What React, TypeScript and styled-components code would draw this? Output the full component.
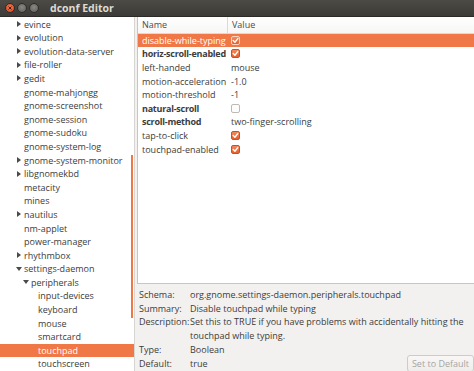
import React from 'react';
import styled, { createGlobalStyle } from 'styled-components';

const GlobalStyle = createGlobalStyle`
  html, body {
    margin: 0;
    padding: 0;
    background: #f2f1f0;
  }
  body {
    font-family: 'Open Sans', 'DejaVu Sans', sans-serif;
    font-size: 9px;
    color: #3c3c3c;
  }
`;

const Window = styled.div`
  width: 474px;
  height: 371px;
  display: flex;
  flex-direction: column;
  overflow: hidden;
  background: #f2f1f0;
`;

const TitleBar = styled.div`
  height: 17px;
  flex: 0 0 17px;
  display: flex;
  align-items: center;
  gap: 2px;
  padding-left: 5px;
  background: linear-gradient(#4b4a45, #3c3b37);
  border-bottom: 1px solid #2b2a27;
  box-sizing: border-box;
`;

const WinButton = styled.span<{ $close?: boolean }>`
  width: 10px;
  height: 10px;
  border-radius: 50%;
  background: ${(p) =>
    p.$close
      ? 'radial-gradient(circle at 50% 40%, #f47a4f, #d9401c)'
      : 'radial-gradient(circle at 50% 40%, #8a8882, #5c5b56)'};
  border: 1px solid #2e2d2a;
  box-sizing: border-box;
  display: flex;
  align-items: center;
  justify-content: center;
`;

const Title = styled.span`
  margin-left: 9px;
  font-weight: bold;
  font-size: 10.5px;
  color: #dfdbd2;
`;

const Body = styled.div`
  flex: 1;
  display: flex;
  min-height: 0;
`;

const TreePane = styled.div`
  position: relative;
  width: 134px;
  flex: 0 0 134px;
  background: #ffffff;
  display: flex;
  flex-direction: column;
  padding-top: 0.3px;
  overflow: hidden;
`;

const TreeRow = styled.div<{ $level: number; $selected?: boolean }>`
  height: 13.6px;
  flex: 0 0 13.6px;
  display: flex;
  align-items: center;
  padding-left: ${(p) => 16 + p.$level * 7}px;
  background: ${(p) => (p.$selected ? '#f07746' : 'transparent')};
  color: ${(p) => (p.$selected ? '#ffffff' : '#3c3c3c')};
  white-space: nowrap;
`;

const Expander = styled.span`
  width: 6px;
  height: 6px;
  margin-right: 2px;
  display: flex;
  align-items: center;
  justify-content: center;
  color: #4a4a4a;
`;

const ScrollIndicator = styled.div`
  position: absolute;
  right: 1px;
  top: 138px;
  width: 2px;
  height: 163px;
  background: #f07746;
`;

const Handle = styled.div`
  width: 3px;
  flex: 0 0 3px;
  background: #f2f1f0;
  border-left: 1px solid #d8d6d2;
  box-sizing: border-box;
`;

const RightPane = styled.div`
  flex: 1;
  display: flex;
  flex-direction: column;
  min-width: 0;
`;

const ListFrame = styled.div`
  height: 267px;
  flex: 0 0 267px;
  background: #ffffff;
  border-left: 1px solid #c9c6c0;
  border-bottom: 1px solid #c9c6c0;
  display: flex;
  flex-direction: column;
  box-sizing: border-box;
`;

const HeaderRow = styled.div`
  height: 16.5px;
  flex: 0 0 16.5px;
  display: grid;
  grid-template-columns: 90px 1fr;
  background: linear-gradient(#ffffff, #f7f6f5);
  border-bottom: 1px solid #dcdad5;
  box-sizing: border-box;
`;

const HeaderCell = styled.div<{ $first?: boolean }>`
  display: flex;
  align-items: center;
  padding-left: 4px;
  color: #4c4c4c;
  border-right: ${(p) => (p.$first ? '1px solid #dcdad5' : 'none')};
`;

const KeyRow = styled.div<{ $selected?: boolean }>`
  height: 13.6px;
  flex: 0 0 13.6px;
  display: grid;
  grid-template-columns: 90px 1fr;
  align-items: center;
  background: ${(p) => (p.$selected ? '#f07746' : 'transparent')};
  color: ${(p) => (p.$selected ? '#ffffff' : '#3c3c3c')};
`;

const KeyName = styled.span<{ $bold?: boolean }>`
  padding-left: 4px;
  font-weight: ${(p) => (p.$bold ? 'bold' : 'normal')};
  letter-spacing: ${(p) => (p.$bold ? '-0.25px' : '0')};
  white-space: nowrap;
`;

const KeyValue = styled.span`
  padding-left: 3px;
  display: flex;
  align-items: center;
  white-space: nowrap;
`;

const Check = styled.span<{ $on: boolean; $selected?: boolean }>`
  width: 9px;
  height: 9px;
  border-radius: 2px;
  box-sizing: border-box;
  display: flex;
  align-items: center;
  justify-content: center;
  background: ${(p) => (p.$on ? 'linear-gradient(#f4895c, #e4602f)' : '#fdfdfd')};
  border: 1px solid
    ${(p) => (p.$selected ? '#fbd2bf' : p.$on ? '#c9521f' : '#bdbab4')};
`;

const Details = styled.div`
  flex: 1;
  display: grid;
  grid-template-columns: 51px 1fr auto;
  grid-auto-rows: minmax(13.7px, auto);
  align-content: start;
  padding: 4px 0 0 2px;
  min-height: 0;
  color: #3c3c3c;
  line-height: 13.4px;
`;

const InfoLabel = styled.span`
  grid-column: 1;
  white-space: nowrap;
`;

const InfoValue = styled.span<{ $wide?: boolean; $gap?: boolean }>`
  grid-column: ${(p) => (p.$wide ? '2 / 4' : '2')};
  margin-bottom: ${(p) => (p.$gap ? '1px' : '0')};
`;

const DefaultButton = styled.button`
  grid-column: 3;
  grid-row: 4 / 6;
  align-self: end;
  height: 17px;
  margin-bottom: -1px;
  padding: 0 4px;
  font-family: 'Open Sans', 'DejaVu Sans', sans-serif;
  font-size: 9px;
  color: #a7a5a0;
  background: linear-gradient(#f8f7f6, #eeedeb);
  border: 1px solid #cfccc7;
  border-radius: 3px;
  white-space: nowrap;
`;

type TreeItem = {
  name: string;
  level: number;
  expander?: 'closed' | 'open';
  selected?: boolean;
};

const tree: TreeItem[] = [
  { name: 'evince', level: 0, expander: 'closed' },
  { name: 'evolution', level: 0, expander: 'closed' },
  { name: 'evolution-data-server', level: 0, expander: 'closed' },
  { name: 'file-roller', level: 0, expander: 'closed' },
  { name: 'gedit', level: 0, expander: 'closed' },
  { name: 'gnome-mahjongg', level: 0 },
  { name: 'gnome-screenshot', level: 0 },
  { name: 'gnome-session', level: 0 },
  { name: 'gnome-sudoku', level: 0 },
  { name: 'gnome-system-log', level: 0 },
  { name: 'gnome-system-monitor', level: 0, expander: 'closed' },
  { name: 'libgnomekbd', level: 0, expander: 'closed' },
  { name: 'metacity', level: 0 },
  { name: 'mines', level: 0 },
  { name: 'nautilus', level: 0, expander: 'closed' },
  { name: 'nm-applet', level: 0 },
  { name: 'power-manager', level: 0 },
  { name: 'rhythmbox', level: 0, expander: 'closed' },
  { name: 'settings-daemon', level: 0, expander: 'open' },
  { name: 'peripherals', level: 1, expander: 'open' },
  { name: 'input-devices', level: 2 },
  { name: 'keyboard', level: 2 },
  { name: 'mouse', level: 2 },
  { name: 'smartcard', level: 2 },
  { name: 'touchpad', level: 2, selected: true },
  { name: 'touchscreen', level: 2 },
];

type KeyItem = {
  name: string;
  bold?: boolean;
  value: string | boolean;
  selected?: boolean;
};

const keys: KeyItem[] = [
  { name: 'disable-while-typing', value: true, selected: true },
  { name: 'horiz-scroll-enabled', value: true, bold: true },
  { name: 'left-handed', value: 'mouse' },
  { name: 'motion-acceleration', value: '-1.0' },
  { name: 'motion-threshold', value: '-1' },
  { name: 'natural-scroll', value: false, bold: true },
  { name: 'scroll-method', value: 'two-finger-scrolling', bold: true },
  { name: 'tap-to-click', value: true },
  { name: 'touchpad-enabled', value: true },
];

function Arrow({ open }: { open: boolean }) {
  return (
    <svg width="6" height="6" viewBox="0 0 6 6">
      {open ? (
        <polygon points="0,1 6,1 3,5" fill="currentColor" />
      ) : (
        <polygon points="1,0 5,3 1,6" fill="currentColor" />
      )}
    </svg>
  );
}

function Tick() {
  return (
    <svg width="7" height="7" viewBox="0 0 7 7">
      <polyline
        points="1.2,3.6 2.9,5.2 5.8,1.6"
        fill="none"
        stroke="#ffffff"
        strokeWidth="1.4"
        strokeLinecap="round"
        strokeLinejoin="round"
      />
    </svg>
  );
}

export default function App() {
  return (
    <Window>
      <GlobalStyle />
      <TitleBar>
        <WinButton $close>
          <svg width="6" height="6" viewBox="0 0 6 6">
            <path d="M1.5 1.5 L4.5 4.5 M4.5 1.5 L1.5 4.5" stroke="#4a1a0a" strokeWidth="1" />
          </svg>
        </WinButton>
        <WinButton />
        <WinButton />
        <Title>dconf Editor</Title>
      </TitleBar>
      <Body>
        <TreePane>
          {tree.map((item) => (
            <TreeRow key={item.name} $level={item.level} $selected={item.selected}>
              {item.expander ? (
                <Expander>
                  <Arrow open={item.expander === 'open'} />
                </Expander>
              ) : (
                <Expander />
              )}
              {item.name}
            </TreeRow>
          ))}
          <ScrollIndicator />
        </TreePane>
        <Handle />
        <RightPane>
          <ListFrame>
            <HeaderRow>
              <HeaderCell $first>Name</HeaderCell>
              <HeaderCell>Value</HeaderCell>
            </HeaderRow>
            {keys.map((k) => (
              <KeyRow key={k.name} $selected={k.selected}>
                <KeyName $bold={k.bold}>{k.name}</KeyName>
                <KeyValue>
                  {typeof k.value === 'boolean' ? (
                    <Check $on={k.value} $selected={k.selected}>
                      {k.value && <Tick />}
                    </Check>
                  ) : (
                    k.value
                  )}
                </KeyValue>
              </KeyRow>
            ))}
          </ListFrame>
          <Details>
            <InfoLabel>Schema:</InfoLabel>
            <InfoValue $wide>org.gnome.settings-daemon.peripherals.touchpad</InfoValue>
            <InfoLabel>Summary:</InfoLabel>
            <InfoValue $wide>Disable touchpad while typing</InfoValue>
            <InfoLabel>Description:</InfoLabel>
            <InfoValue $wide $gap>
              Set this to TRUE if you have problems with accidentally hitting the touchpad
              while typing.
            </InfoValue>
            <InfoLabel>Type:</InfoLabel>
            <InfoValue>Boolean</InfoValue>
            <InfoLabel>Default:</InfoLabel>
            <InfoValue>true</InfoValue>
            <DefaultButton>Set to Default</DefaultButton>
          </Details>
        </RightPane>
      </Body>
    </Window>
  );
}
